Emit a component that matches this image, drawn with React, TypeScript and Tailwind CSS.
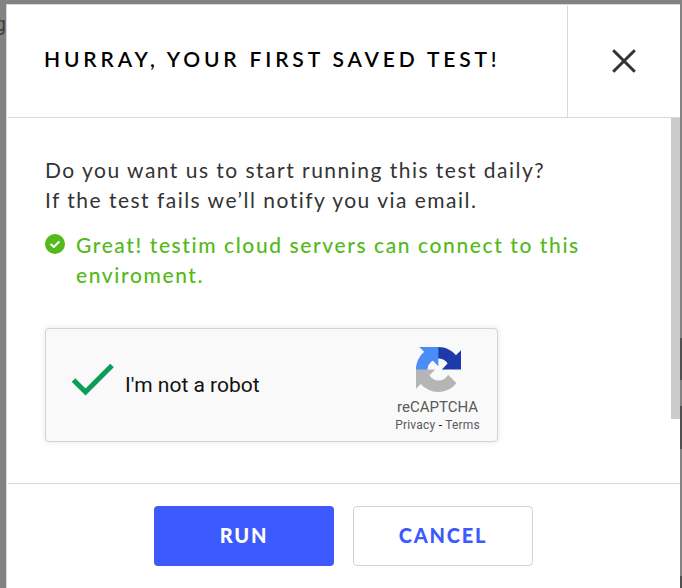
import { useState } from "react";

// ─── Icons ────────────────────────────────────────────────────────────────────
function CloseIcon() {
  return (
    <svg width="24" height="24" viewBox="0 0 24 24" fill="none" stroke="#333333" strokeWidth="3">
      <path d="M1.2 1.2 22.8 22.8M22.8 1.2 1.2 22.8" />
    </svg>
  );
}

function SuccessIcon() {
  return (
    <svg width="20" height="20" viewBox="0 0 20 20" fill="none" className="shrink-0">
      <circle cx="10" cy="10" r="10" fill="#54b91a" />
      <path d="M6.2 10.5 8.8 13 13.8 8" stroke="#ffffff" strokeWidth="2" strokeLinecap="round" strokeLinejoin="round" />
    </svg>
  );
}

function RecaptchaLogo() {
  return (
    <svg width="45" height="45" viewBox="0 0 64 64" className="ml-px">
      <path
        fill="#1c3aa9"
        d="M64 31.955l-.033-1.37V4.687l-7.16 7.16C50.948 4.674 42.033.093 32.05.093c-10.4 0-19.622 4.96-25.458 12.64l11.736 11.86a15.55 15.55 0 0 1 4.754-5.334c2.05-1.6 4.952-2.906 8.968-2.906.485 0 .86.057 1.135.163 4.976.393 9.288 3.14 11.828 7.124l-8.307 8.307L64 31.953"
      />
      <path
        fill="#4a8df6"
        d="M31.862.094l-1.37.033H4.594l7.16 7.16C4.58 13.147 0 22.06 0 32.046c0 10.4 4.96 19.622 12.64 25.458L24.5 45.768a15.55 15.55 0 0 1-5.334-4.754c-1.6-2.05-2.906-4.952-2.906-8.968 0-.485.057-.86.163-1.135.393-4.976 3.14-9.288 7.124-11.828l8.307 8.307L31.86.095"
      />
      <path
        fill="#b5b5b5"
        d="M.001 32.045l.033 1.37v25.898l7.16-7.16c5.86 7.173 14.774 11.754 24.76 11.754 10.4 0 19.622-4.96 25.458-12.64l-11.736-11.86a15.55 15.55 0 0 1-4.754 5.334c-2.05 1.6-4.952 2.906-8.968 2.906-.485 0-.86-.057-1.135-.163-4.976-.393-9.288-3.14-11.828-7.124l8.307-8.307c-10.522.04-22.4.066-27.295-.005"
      />
    </svg>
  );
}

// ─── Captcha box ──────────────────────────────────────────────────────────────
function Captcha() {
  return (
    <div className="flex h-[114px] w-[453px] justify-between rounded-[4px] border border-[#d3d3d3] bg-[#f9f9f9] pr-[17px] pl-[25px] font-['Roboto',sans-serif] shadow-[0_0_5px_1px_rgba(0,0,0,0.08)]">
      <div className="flex items-center">
        <svg width="44" height="34" viewBox="0 0 44 34" fill="none" className="mb-2.5">
          <path d="M2.5 17 14.5 29 41 2.5" stroke="#0b9d58" strokeWidth="5" />
        </svg>
        <span className="ml-2.5 text-[21px] leading-6 text-[#111111]">I'm not a robot</span>
      </div>
      <div className="flex flex-col items-center pt-[18px]">
        <RecaptchaLogo />
        <p className="mt-1.5 text-[15px] leading-[18px] text-[#5a5a5a]">reCAPTCHA</p>
        <p className="text-[12px] leading-[18px] tracking-[0.22px] whitespace-pre text-[#5a5a5a]">
          Privacy<span className="text-black"> - </span>Terms
        </p>
      </div>
    </div>
  );
}

// ─── Dialog ───────────────────────────────────────────────────────────────────
export default function App() {
  const [open, setOpen] = useState(true);
  const close = () => setOpen(false);

  return (
    <div className="flex h-[588px] w-[682px] overflow-hidden bg-[#838383] pt-1 font-['Lato',sans-serif]">
      {/* Slice of the dimmed page on the left */}
      <div className="flex w-1.5 shrink-0 justify-end overflow-hidden pt-2 font-['Roboto',sans-serif] text-[20px] leading-6 text-[#3f3f3f]">
        g
      </div>

      {open && (
        <div className="flex w-[674px] shrink-0 flex-col border-t border-l border-[#d5d5e3] bg-white pt-px pl-px">
          <header className="flex h-28 shrink-0 border-b border-[#d8d8e4]">
            <h1 className="flex-1 pt-[37px] pl-9 text-[21px] leading-8 font-semibold tracking-[3.84px] whitespace-nowrap text-black">
              HURRAY, YOUR FIRST SAVED TEST!
            </h1>
            <button
              onClick={close}
              aria-label="Close"
              className="flex w-[113px] items-center justify-center border-l border-[#d8d8e4] pb-0.5"
            >
              <CloseIcon />
            </button>
          </header>

          <main className="flex h-[365px] shrink-0">
            <div className="flex-1 pt-[37px] pl-[37px]">
              <p className="text-[21px] leading-[30px] tracking-[1.48px] whitespace-nowrap text-[#333333]">
                Do you want us to start running this test daily?
                <br />
                If the test fails we’ll notify you via email.
              </p>
              <div className="mt-[15px] flex gap-[11px] text-[21px] leading-[30px] font-medium tracking-[1.6px] whitespace-nowrap text-[#54b91a]">
                <div className="pt-1">
                  <SuccessIcon />
                </div>
                <p>
                  Great! testim cloud servers can connect to this
                  <br />
                  enviroment.
                </p>
              </div>
              <div className="mt-[38px]">
                <Captcha />
              </div>
            </div>
            {/* Scrollbar thumb */}
            <div className="h-[301px] w-[9px] bg-[#cbcbcb]" />
          </main>

          <footer className="flex flex-1 gap-[19px] border-t border-[#d8d8e4] pt-[22px] pl-[146px]">
            <button className="h-[60px] w-[180px] rounded-[4px] bg-[#3d5afe] pb-0.5 text-[20px] font-black tracking-[1.8px] text-white">
              RUN
            </button>
            <button
              onClick={close}
              className="h-[60px] w-[180px] rounded-[4px] border border-[#cfd2d8] bg-white pb-0.5 text-[20px] font-black tracking-[1.8px] text-[#3d5afe]"
            >
              CANCEL
            </button>
          </footer>
        </div>
      )}

      {/* Slice of the dimmed page on the right */}
      <div className="flex w-0.5 shrink-0 flex-col">
        <div className="mt-[334px] h-[42px] bg-[#505050]" />
        <div className="mt-[26px] h-[43px] bg-[#505050]" />
        <div className="mt-[127px] flex-1 bg-[#505050]" />
      </div>
    </div>
  );
}
